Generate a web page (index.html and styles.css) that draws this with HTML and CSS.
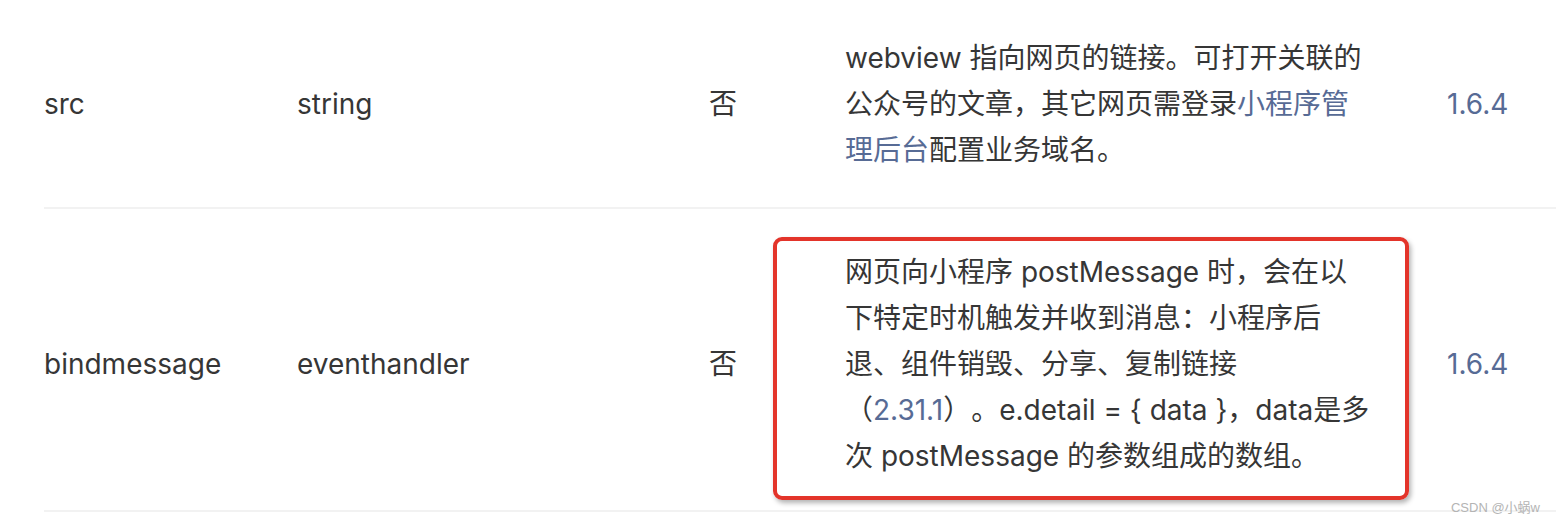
FILE: index.html
```html
<!doctype html>
<html lang="zh-CN">
  <head>
    <meta charset="UTF-8" />
    <meta name="viewport" content="width=device-width, initial-scale=1.0" />
    <title>web-view 属性</title>
    <link rel="stylesheet" href="styles.css">
  </head>
  <body>
    <!-- Attribute table (cropped) -->
    <table class="attr-table">
      <colgroup>
        <col class="col-name" />
        <col class="col-type" />
        <col class="col-required" />
        <col class="col-desc" />
        <col class="col-version" />
      </colgroup>
      <tbody>
        <tr class="row-src">
          <td>src</td>
          <td>string</td>
          <td>否</td>
          <td>
            <div class="desc">
              webview 指向网页的链接。可打开关联的<br>公众号的文章，其它网页需登录<a href="#">小程序管<br>理后台</a>配置业务域名。
            </div>
          </td>
          <td><a href="#">1.6.4</a></td>
        </tr>
        <tr class="row-message">
          <td>bindmessage</td>
          <td>eventhandler</td>
          <td>否</td>
          <td>
            <div class="desc marked">
              网页向小程序 postMessage 时，会在以<br>下特定时机触发并收到消息：小程序后<br>退、组件销毁、分享、复制链接<br>（<a href="#">2.31.1</a>）。e.detail = { data }，data是多<br>次 postMessage 的参数组成的数组。
            </div>
          </td>
          <td><a href="#">1.6.4</a></td>
        </tr>
      </tbody>
    </table>

    <!-- Watermark -->
    <div class="watermark">CSDN @小蜗w</div>
  </body>
</html>
```

FILE: styles.css
```css
/* Page */
body {
  margin: 0;
  background: #fff;
  font-family: Inter, "Noto Sans CJK SC", sans-serif;
  color: #363636;
  overflow: hidden;
}

a {
  color: #576b95;
  text-decoration: none;
}

/* Table */
.attr-table {
  margin-left: 44px;
  width: 1512px;
  table-layout: fixed;
  border-collapse: collapse;
  font-size: 28px;
  line-height: 46px;
  text-spacing-trim: space-all; /* keep full-width punctuation spacing */
}

.col-name { width: 253px; }
.col-type { width: 412px; }
.col-required { width: 136px; }
.col-desc { width: 602px; }
.col-version { width: 109px; }

.attr-table td {
  padding: 0;
  vertical-align: middle;
  border-bottom: 2px solid #f2f2f2;
}

.row-src td {
  height: 207px;
}

.row-message td {
  height: 293px;
  padding-top: 8px;
}

.desc {
  width: 518px;
  white-space: nowrap;
  position: relative;
}

/* Red annotation frame drawn over the description */
.desc.marked::after {
  content: "";
  position: absolute;
  top: -12px;
  left: -72px;
  right: -46px;
  bottom: -21px;
  border: 4px solid #e3342a;
  border-radius: 9px;
  box-shadow: 2px 3px 5px rgba(0, 0, 0, 0.3);
  pointer-events: none;
}

.watermark {
  position: absolute;
  right: 16px;
  bottom: 6px;
  font-family: "Liberation Sans", "Noto Sans CJK SC", sans-serif;
  font-size: 13px;
  color: #b4b4b4;
}
```
